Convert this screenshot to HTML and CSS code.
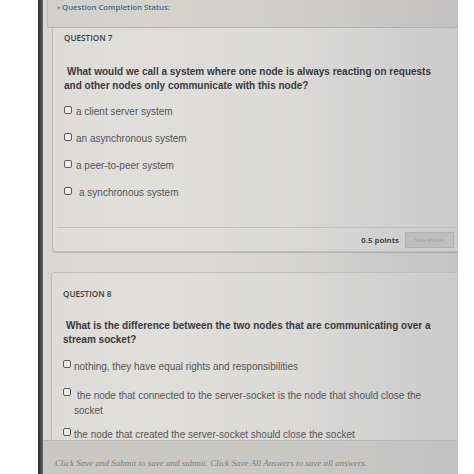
FILE: index.html
```html
<!DOCTYPE html>
<html>
<head>
<meta charset="utf-8">
<link rel="stylesheet" href="styles.css">
</head>
<body>
<div class="photo">
  <div class="edge-left"></div>
  <div class="bezel"></div>
  <div class="screen">
    <div class="status"><span class="tri">&#9662;</span> Question Completion Status:</div>
    <div class="card q7">
      <div class="qtitle">QUESTION 7</div>
      <div class="qtext"><span class="lead">What would we call a system where one node is always reacting on requests</span><br>and other nodes only communicate with this node?</div>
      <div class="opts">
        <div class="opt"><span class="cb"></span><span class="lbl">a client server system</span></div>
        <div class="opt"><span class="cb"></span><span class="lbl">an asynchronous system</span></div>
        <div class="opt"><span class="cb"></span><span class="lbl">a peer-to-peer system</span></div>
        <div class="opt"><span class="cb"></span><span class="lbl shift">a synchronous system</span></div>
      </div>
      <div class="spacer"></div>
      <div class="cfoot">
        <span class="points">0.5 points</span>
        <span class="save">Save Answer</span>
      </div>
    </div>
    <div class="card q8">
      <div class="qtitle t8">QUESTION 8</div>
      <div class="qtext x8"><span class="lead">What is the difference between the two nodes that are communicating over a</span><br>stream socket?</div>
      <div class="opts o8">
        <div class="opt"><span class="cb"></span><span class="lbl">nothing, they have equal rights and responsibilities</span></div>
        <div class="opt two"><span class="cb"></span><span class="lbl"><span class="lead">the node that connected to the server-socket is the node that should close the</span><br>socket</span></div>
        <div class="opt last"><span class="cb"></span><span class="lbl">the node that created the server-socket should close the socket</span></div>
      </div>
    </div>
    <div class="bottom">Click Save and Submit to save and submit. Click Save All Answers to save all answers.</div>
  </div>
  <div class="edge-right"></div>
</div>
</body>
</html>
```
FILE: styles.css
```css
html, body {
  margin: 0;
  padding: 0;
  background: #ffffff;
}
.photo {
  width: 474px;
  height: 474px;
  display: flex;
  overflow: hidden;
}
.edge-left {
  width: 38px;
  background: #ffffff;
}
.bezel {
  width: 5px;
  background: linear-gradient(to right, #2c2c2e, #47474a 60%, #6a6a6a);
}
.screen {
  width: 415px;
  height: 474px;
  display: flex;
  flex-direction: column;
  overflow: hidden;
  background: linear-gradient(to right, #d9d7d2 0%, #dddbd6 25%, #d6d5d2 60%, #cacaca 85%, #c4c4c4 100%);
}
.edge-right {
  flex: 1;
  background: #ffffff;
}
.status {
  flex: none;
  margin-left: 4px;
  border-left: 1px solid #bbb9b5;
  border-bottom: 1px solid #b4b2ae;
  padding-left: 9px;
  padding-top: 1px;
  box-sizing: border-box;
  height: 28px;
  font-family: "Open Sans", "Liberation Sans", sans-serif;
  font-weight: 600;
  font-size: 7.8px;
  line-height: 12px;
  color: #3e6a90;
  background: rgba(190, 188, 184, 0.25);
}
.tri {
  font-size: 6px;
  color: #7a96b0;
}
.card {
  flex: none;
  border: 1px solid #bfbdb9;
  border-right: none;
  background: rgba(255, 255, 255, 0.12);
  display: flex;
  flex-direction: column;
}
.q7 {
  margin-left: 9px;
  border-top: none;
  height: 224px;
  box-sizing: border-box;
  border-bottom-left-radius: 4px;
  box-shadow: 0 1px 1px rgba(120, 118, 114, 0.35);
  padding-left: 11px;
}
.qtitle {
  font-family: "Open Sans", "Liberation Sans", sans-serif;
  font-weight: 600;
  font-size: 8.2px;
  line-height: 12px;
  color: #3c3c3c;
  margin-top: 4px;
}
.qtext {
  margin-top: 21px;
  font-family: "Liberation Sans", Arial, sans-serif;
  font-weight: bold;
  font-size: 10px;
  line-height: 14px;
  color: #3a3a3a;
}
.lead {
  padding-left: 3px;
}
.opts {
  margin-top: 12px;
  display: flex;
  flex-direction: column;
  gap: 13px;
}
.opt {
  display: flex;
  align-items: flex-start;
  font-family: "Liberation Sans", Arial, sans-serif;
  font-size: 10px;
  line-height: 14px;
  color: #555555;
}
.cb {
  flex: none;
  width: 8px;
  height: 8px;
  box-sizing: border-box;
  border: 1px solid #5a5a5a;
  border-radius: 2px;
  background: #ecebe8;
  margin-top: 1px;
  margin-right: 4px;
}
.shift {
  padding-left: 3px;
}
.spacer {
  flex: 1;
}
.cfoot {
  margin-left: -7px;
  height: 23px;
  border-top: 1px solid #c2c0bc;
  display: flex;
  align-items: center;
  justify-content: flex-end;
  padding-right: 4px;
  gap: 6px;
}
.points {
  font-family: "Open Sans", "Liberation Sans", sans-serif;
  font-weight: bold;
  font-size: 7.8px;
  color: #4a4a4a;
}
.save {
  width: 49px;
  height: 16px;
  box-sizing: border-box;
  background: #bfbebc;
  border: 1px solid #b3b2b0;
  font-family: "Open Sans", "Liberation Sans", sans-serif;
  font-size: 5px;
  color: #9c9c9c;
  display: flex;
  align-items: center;
  justify-content: center;
}
.q8 {
  margin-top: 20px;
  margin-left: 8px;
  flex: 1;
  min-height: 0;
  overflow: hidden;
  border-bottom: none;
  border-top-left-radius: 4px;
  padding-left: 11px;
}
.t8 {
  margin-top: 15px;
}
.x8 {
  margin-top: 19px;
}
.o8 {
  margin-top: 13px;
  gap: 14px;
}
.o8 .cb {
  margin-right: 3px;
  margin-top: 0;
}
.two {
  line-height: 15px;
}
.o8 .last {
  margin-top: -4px;
}
.bottom {
  flex: none;
  height: 34px;
  box-sizing: border-box;
  border-top: 1px solid #b9b7b3;
  background: linear-gradient(to right, #cac8c4, #c9c8c5 60%, #c2c2c2);
  padding-left: 12px;
  padding-top: 15px;
  font-family: "Liberation Serif", "Times New Roman", serif;
  font-style: italic;
  font-size: 9px;
  line-height: 14px;
  color: #7c7c7c;
}
```
